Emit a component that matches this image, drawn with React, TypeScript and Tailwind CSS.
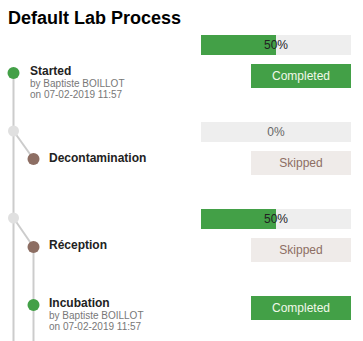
type Status = 'completed' | 'skipped';

interface Step {
  name: string;
  level: 0 | 1;
  status: Status;
  progress?: number;
  by?: string;
  on?: string;
}

const STEPS: Step[] = [
  { name: 'Started', level: 0, status: 'completed', progress: 50, by: 'Baptiste BOILLOT', on: '07-02-2019 11:57' },
  { name: 'Decontamination', level: 1, status: 'skipped', progress: 0 },
  { name: 'Réception', level: 1, status: 'skipped', progress: 50 },
  { name: 'Incubation', level: 1, status: 'completed', by: 'Baptiste BOILLOT', on: '07-02-2019 11:57' },
];

const ProgressBar = ({ value }: { value: number }) => (
  <div className="relative h-[20px] w-[150px] bg-[#eeeeee]">
    <div className="h-full bg-[#43a047]" style={{ width: `${value}%` }} />
    <span
      className={`absolute inset-0 flex items-center justify-center text-[12px] ${
        value > 0 ? 'text-[#222]' : 'text-[#666]'
      }`}
    >
      {value}%
    </span>
  </div>
);

const StatusBadge = ({ status }: { status: Status }) =>
  status === 'completed' ? (
    <div className="flex h-[24px] w-[100px] items-center justify-center bg-[#43a047] text-[12px] text-[#f1f8e9]">
      Completed
    </div>
  ) : (
    <div className="flex h-[24px] w-[100px] items-center justify-center bg-[#efebe9] text-[12px] text-[#8d6e63]">
      Skipped
    </div>
  );

// branch graph drawn behind the step list (coords relative to list top)
const Graph = () => (
  <svg className="absolute left-0 top-0" width="48" height="320">
    <g stroke="#cccccc" strokeWidth="2" fill="none">
      <line x1="13.5" y1="38" x2="13.5" y2="320" />
      <line x1="13.5" y1="96" x2="33.5" y2="124" />
      <line x1="13.5" y1="183" x2="33.5" y2="212" />
      <line x1="33.5" y1="212" x2="33.5" y2="320" />
    </g>
    <circle cx="13.5" cy="38" r="6" fill="#43a047" />
    <circle cx="13.5" cy="96" r="5.5" fill="#e0e0e0" />
    <circle cx="33.5" cy="124" r="6" fill="#8d6e63" />
    <circle cx="13.5" cy="183" r="5.5" fill="#e0e0e0" />
    <circle cx="33.5" cy="212" r="6" fill="#8d6e63" />
    <circle cx="33.5" cy="270" r="6" fill="#43a047" />
  </svg>
);

export default function App() {
  return (
    <div
      className="flex h-[341px] w-[363px] flex-col overflow-hidden bg-white"
      style={{ fontFamily: '"Liberation Sans", Arial, sans-serif' }}
    >
      <h1 className="px-[8px] pt-[7px] text-[18px] font-bold leading-[22px] text-black">
        Default Lab Process
      </h1>

      <div className="relative mt-[6px] flex-1">
        <Graph />
        <div className="relative flex flex-col">
          {STEPS.map((step) => (
            <div key={step.name} className="mb-[34px] flex flex-col gap-[9px] pr-[12px]">
              {step.progress !== undefined && (
                <div className="flex justify-end">
                  <ProgressBar value={step.progress} />
                </div>
              )}
              <div className="flex h-[24px] items-start justify-between">
                <div className={step.level === 0 ? 'pl-[30px]' : 'pl-[49px]'}>
                  <div className="text-[12px] font-bold leading-[14px] text-[#222]">{step.name}</div>
                  {step.by && (
                    <div className="text-[10px] leading-[11px] text-[#777]">
                      <div>by {step.by}</div>
                      <div>on {step.on}</div>
                    </div>
                  )}
                </div>
                <StatusBadge status={step.status} />
              </div>
            </div>
          ))}
        </div>
      </div>
    </div>
  );
}
